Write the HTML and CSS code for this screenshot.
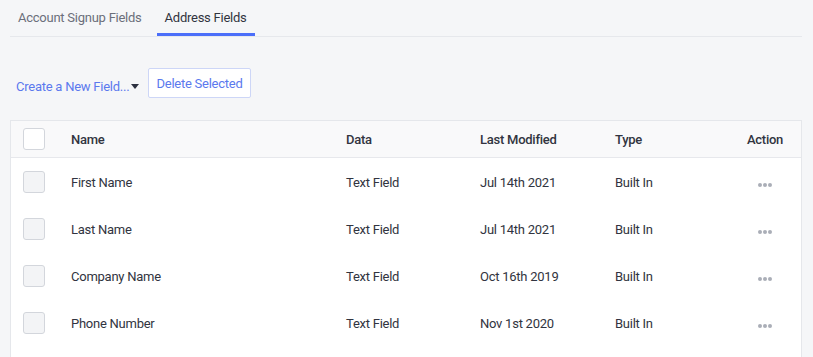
FILE: index.html
```html
<!DOCTYPE html>
<html lang="en">
<head>
<meta charset="utf-8">
<title>Address Fields</title>
<link rel="stylesheet" href="styles.css">
</head>
<body>
<div class="page">
  <nav class="tabs">
    <a class="tab">Account Signup Fields</a>
    <a class="tab active">Address Fields</a>
  </nav>
  <div class="toolbar">
    <a class="create">Create a New Field...<span class="caret"></span></a>
    <button class="btn">Delete Selected</button>
  </div>
  <div class="table">
    <div class="row head">
      <span class="cb"></span>
      <span>Name</span>
      <span>Data</span>
      <span>Last Modified</span>
      <span>Type</span>
      <span class="act">Action</span>
    </div>
    <div class="row">
      <span class="cb"></span>
      <span>First Name</span>
      <span>Text Field</span>
      <span>Jul 14th 2021</span>
      <span>Built In</span>
      <span class="act"><i class="dots"><b></b><b></b><b></b></i></span>
    </div>
    <div class="row">
      <span class="cb"></span>
      <span>Last Name</span>
      <span>Text Field</span>
      <span>Jul 14th 2021</span>
      <span>Built In</span>
      <span class="act"><i class="dots"><b></b><b></b><b></b></i></span>
    </div>
    <div class="row">
      <span class="cb"></span>
      <span>Company Name</span>
      <span>Text Field</span>
      <span>Oct 16th 2019</span>
      <span>Built In</span>
      <span class="act"><i class="dots"><b></b><b></b><b></b></i></span>
    </div>
    <div class="row">
      <span class="cb"></span>
      <span>Phone Number</span>
      <span>Text Field</span>
      <span>Nov 1st 2020</span>
      <span>Built In</span>
      <span class="act"><i class="dots"><b></b><b></b><b></b></i></span>
    </div>
  </div>
</div>
</body>
</html>
```

FILE: styles.css
```css
* { box-sizing: border-box; }
html, body { margin: 0; background: #f5f6f8; }
body {
  font-family: Roboto, "Liberation Sans", sans-serif;
  font-size: 13px;
  letter-spacing: -0.25px;
  color: #313440;
}
.page { padding: 0 11px 0 10px; }
.tabs {
  display: flex;
  gap: 7px;
  height: 37px;
  border-bottom: 1px solid #e6e8ec;
}
.tab {
  padding: 10px 8px 0;
  color: #6b6f7b;
  border-bottom: 3px solid transparent;
  height: 36px;
  white-space: nowrap;
}
.tab.active {
  color: #313440;
  border-bottom-color: #4b6ef9;
}
.toolbar {
  display: flex;
  align-items: center;
  margin-top: 31px;
  height: 30px;
}
.create {
  color: #5b79ee;
  padding-left: 6px;
  padding-top: 6px;
  width: 138px;
  display: flex;
  align-items: center;
  gap: 2px;
  white-space: nowrap;
}
.caret {
  width: 0; height: 0;
  margin-top: 1px;
  border-left: 4px solid transparent;
  border-right: 4px solid transparent;
  border-top: 5px solid #2c3040;
}
.btn {
  height: 30px;
  width: 103px;
  padding: 0;
  background: #fff;
  border: 1px solid #cdd6f7;
  border-radius: 2px;
  color: #5b79ee;
  font: inherit;
  letter-spacing: -0.25px;
  white-space: nowrap;
}
.table {
  margin-top: 22px;
  background: #fff;
  border: 1px solid #e5e7eb;
  border-bottom: none;
  height: 237px;
}
.row {
  display: grid;
  grid-template-columns: 48px 275px 134px 135px 1fr 50px;
  align-items: center;
  padding: 1px 11px 0 12px;
  height: 47px;
}
.row.head {
  height: 37px;
  padding-top: 0;
  background: #f9f9fa;
  border-bottom: 1px solid #e7e8ec;
  font-weight: 500;
}
.cb {
  width: 22px; height: 22px;
  border: 1px solid #d3d6dc;
  border-radius: 3px;
  background: #f3f4f6;
}
.head .cb { background: #fff; }
.act { text-align: center; }
.dots { display: inline-flex; gap: 1px; }
.dots b {
  width: 4px; height: 4px; border-radius: 50%;
  background: #aaaeb7;
}
```
